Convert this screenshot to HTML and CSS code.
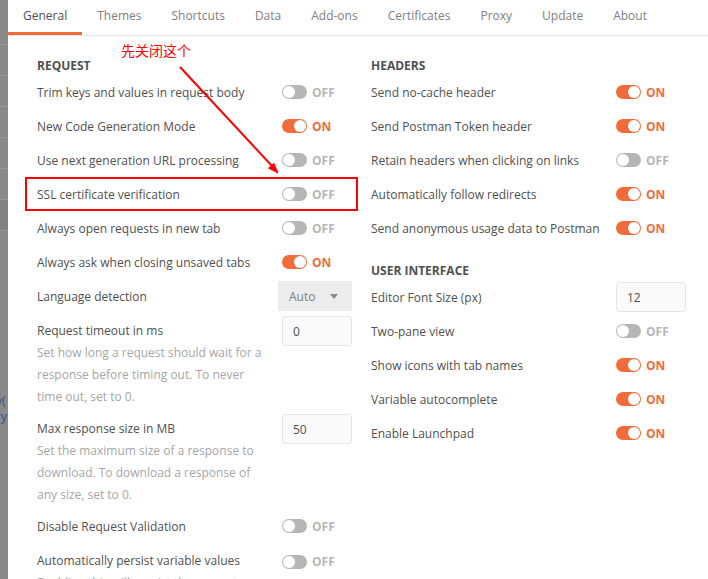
FILE: index.html
```html
<!DOCTYPE html>
<html lang="en">
<head>
    <meta charset="UTF-8">
    <meta name="viewport" content="width=device-width, initial-scale=1.0">
    <title>Settings</title>
    <link rel="stylesheet" href="styles.css">
</head>
<body>
    <div class="backdrop">
        <div class="bd-line"></div>
        <div class="bd-line"></div>
        <div class="bd-line"></div>
        <div class="bd-line"></div>
        <div class="bd-line"></div>
        <div class="bd-line"></div>
        <div class="bd-line dark"></div>
        <div class="bd-code">y(<br>ry</div>
    </div>

    <div class="modal">
        <div class="tabs">
            <div class="tab active">General</div>
            <div class="tab">Themes</div>
            <div class="tab">Shortcuts</div>
            <div class="tab">Data</div>
            <div class="tab">Add-ons</div>
            <div class="tab">Certificates</div>
            <div class="tab">Proxy</div>
            <div class="tab">Update</div>
            <div class="tab">About</div>
        </div>

        <div class="content">
            <div class="column">
                <h3 class="section-title">Request</h3>

                <div class="row">
                    <span class="label">Trim keys and values in request body</span>
                    <span class="control"><span class="switch"></span><span class="state">OFF</span></span>
                </div>
                <div class="row">
                    <span class="label">New Code Generation Mode</span>
                    <span class="control"><span class="switch on"></span><span class="state on">ON</span></span>
                </div>
                <div class="row">
                    <span class="label">Use next generation URL processing</span>
                    <span class="control"><span class="switch"></span><span class="state">OFF</span></span>
                </div>
                <div class="row marked">
                    <span class="label">SSL certificate verification</span>
                    <span class="control"><span class="switch"></span><span class="state">OFF</span></span>
                </div>
                <div class="row">
                    <span class="label">Always open requests in new tab</span>
                    <span class="control"><span class="switch"></span><span class="state">OFF</span></span>
                </div>
                <div class="row">
                    <span class="label">Always ask when closing unsaved tabs</span>
                    <span class="control"><span class="switch on"></span><span class="state on">ON</span></span>
                </div>
                <div class="row">
                    <span class="label">Language detection</span>
                    <span class="select">Auto
                        <svg class="caret" width="8" height="5" viewBox="0 0 8 5"><path d="M0 0h8L4 5z" fill="#888"/></svg>
                    </span>
                </div>
                <div class="row tall">
                    <div class="label-block">
                        <div class="label">Request timeout in ms</div>
                        <div class="desc">Set how long a request should wait for a response before timing out. To never time out, set to 0.</div>
                    </div>
                    <input class="field" type="text" value="0">
                </div>
                <div class="row tall">
                    <div class="label-block">
                        <div class="label">Max response size in MB</div>
                        <div class="desc">Set the maximum size of a response to download. To download a response of any size, set to 0.</div>
                    </div>
                    <input class="field" type="text" value="50">
                </div>
                <div class="row">
                    <span class="label">Disable Request Validation</span>
                    <span class="control"><span class="switch"></span><span class="state">OFF</span></span>
                </div>
                <div class="row tall">
                    <div class="label-block">
                        <div class="label">Automatically persist variable values</div>
                        <div class="desc">Enabling this will persist the current value of variables at the end of every request.</div>
                    </div>
                    <span class="control"><span class="switch"></span><span class="state">OFF</span></span>
                </div>
            </div>

            <div class="column">
                <h3 class="section-title">Headers</h3>

                <div class="row">
                    <span class="label">Send no-cache header</span>
                    <span class="control"><span class="switch on"></span><span class="state on">ON</span></span>
                </div>
                <div class="row">
                    <span class="label">Send Postman Token header</span>
                    <span class="control"><span class="switch on"></span><span class="state on">ON</span></span>
                </div>
                <div class="row">
                    <span class="label">Retain headers when clicking on links</span>
                    <span class="control"><span class="switch"></span><span class="state">OFF</span></span>
                </div>
                <div class="row">
                    <span class="label">Automatically follow redirects</span>
                    <span class="control"><span class="switch on"></span><span class="state on">ON</span></span>
                </div>
                <div class="row">
                    <span class="label">Send anonymous usage data to Postman</span>
                    <span class="control"><span class="switch on"></span><span class="state on">ON</span></span>
                </div>

                <h3 class="section-title next">User Interface</h3>

                <div class="row">
                    <span class="label">Editor Font Size (px)</span>
                    <input class="field" type="text" value="12">
                </div>
                <div class="row">
                    <span class="label">Two-pane view</span>
                    <span class="control"><span class="switch"></span><span class="state">OFF</span></span>
                </div>
                <div class="row">
                    <span class="label">Show icons with tab names</span>
                    <span class="control"><span class="switch on"></span><span class="state on">ON</span></span>
                </div>
                <div class="row">
                    <span class="label">Variable autocomplete</span>
                    <span class="control"><span class="switch on"></span><span class="state on">ON</span></span>
                </div>
                <div class="row">
                    <span class="label">Enable Launchpad</span>
                    <span class="control"><span class="switch on"></span><span class="state on">ON</span></span>
                </div>
            </div>
        </div>

        <!-- annotation drawn over the screenshot -->
        <div class="note">先关闭这个</div>
        <svg class="arrow" width="700" height="579" viewBox="0 0 700 579">
            <line x1="172" y1="67" x2="264" y2="166" stroke="#f00" stroke-width="2"/>
            <path d="M270 173 L260.6 168.1 L265.8 163.3 Z" fill="#f00" stroke="#f00" stroke-width="1"/>
        </svg>
    </div>
</body>
</html>
```

FILE: styles.css
```css
html, body {
    margin: 0;
    height: 100%;
    overflow: hidden;
}

body {
    font-family: 'Open Sans', 'Noto Sans', sans-serif;
    font-size: 12px;
    color: #505050;
    background: #8a8a8a;
    display: flex;
}

.backdrop {
    width: 8px;
    flex: none;
    padding-top: 14px;
    overflow: hidden;
}

.bd-line {
    height: 30px;
    border-bottom: 1px solid #979797;
}

.bd-line.dark {
    background: #828282;
}

.bd-code {
    margin-top: 162px;
    margin-left: -4px;
    color: #3c4f8a;
    font-size: 12px;
    line-height: 16px;
}

.modal {
    flex: 1;
    background: #fff;
    position: relative;
}

.tabs {
    display: flex;
    border-bottom: 1px solid #e6e6e6;
}

.tab {
    padding: 0 15px;
    height: 32px;
    line-height: 32px;
    border-bottom: 3px solid transparent;
    color: #808080;
    white-space: nowrap;
}

.tab.active {
    color: #505050;
    border-bottom-color: #f26b3a;
}

.content {
    display: grid;
    grid-template-columns: 315px 315px;
    column-gap: 19px;
    padding: 20px 0 0 29px;
}

.section-title {
    margin: 0;
    padding-top: 1px;
    font-size: 12px;
    font-weight: 700;
    line-height: 18px;
    text-transform: uppercase;
    color: #505050;
}

.section-title.next {
    margin-top: 16px;
}

.row {
    position: relative;
    display: flex;
    align-items: center;
    justify-content: space-between;
    height: 34px;
}

.row > .label {
    padding-top: 2px;
}

.row.tall {
    height: auto;
    align-items: flex-start;
    padding: 6px 0 4px;
}

.row.tall .label-block {
    padding-top: 1px;
    margin-bottom: -1px;
}

.row.tall .field {
    margin-top: -3px;
}

.row.tall .control {
    margin-top: 4px;
}

.row.marked::after {
    content: "";
    position: absolute;
    top: 0;
    bottom: 0;
    left: -12px;
    right: -6px;
    border: 2px solid #f00;
}

.label {
    white-space: nowrap;
    line-height: 22px;
}

.label-block {
    line-height: 22px;
}

.desc {
    width: 228px;
    color: #a6a6a6;
}

.control {
    width: 70px;
    display: flex;
    align-items: center;
}

.switch {
    position: relative;
    width: 25px;
    height: 14px;
    border-radius: 7px;
    background: #b6b6b6;
    margin-right: 5px;
}

.switch::after {
    content: "";
    position: absolute;
    top: 1px;
    left: 1px;
    width: 12px;
    height: 12px;
    border-radius: 50%;
    background: #fff;
}

.switch.on {
    background: #f26b3a;
}

.switch.on::after {
    left: 12px;
}

.state {
    font-weight: 700;
    color: #b6b6b6;
}

.state.on {
    color: #f26b3a;
}

.field {
    box-sizing: border-box;
    width: 70px;
    height: 30px;
    margin: 0;
    padding: 0 0 0 10px;
    border: 1px solid #e6e6e6;
    border-radius: 3px;
    background: #fafafa;
    font-family: inherit;
    font-size: 12px;
    color: #505050;
    outline: none;
}

.select {
    box-sizing: border-box;
    width: 74px;
    height: 30px;
    padding: 0 14px 0 11px;
    display: flex;
    align-items: center;
    justify-content: space-between;
    background: #ececec;
    color: #808080;
}

.note {
    position: absolute;
    left: 113px;
    top: 42px;
    font-family: 'Noto Sans CJK SC', sans-serif;
    font-size: 14px;
    line-height: 16px;
    color: #f00;
}

.arrow {
    position: absolute;
    left: 0;
    top: 0;
    pointer-events: none;
}
```
